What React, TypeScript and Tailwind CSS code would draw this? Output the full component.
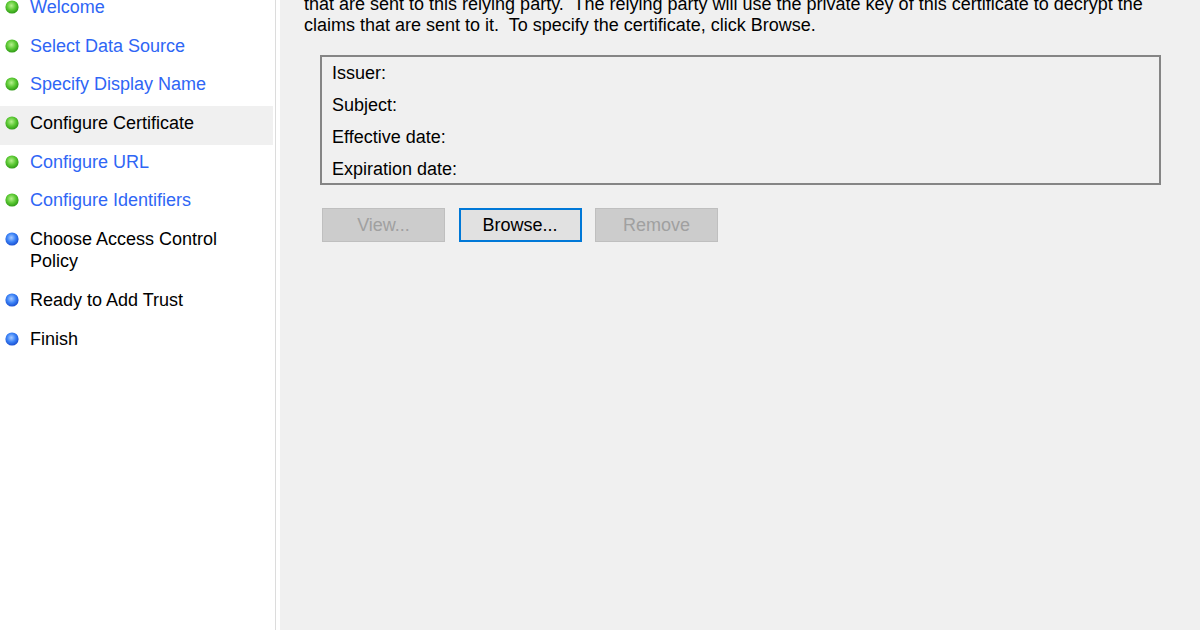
import React from 'react'

type Step = { label: string; status: 'done' | 'current' | 'todo'; link?: boolean }

const steps: Step[] = [
  { label: 'Welcome', status: 'done', link: true },
  { label: 'Select Data Source', status: 'done', link: true },
  { label: 'Specify Display Name', status: 'done', link: true },
  { label: 'Configure Certificate', status: 'current' },
  { label: 'Configure URL', status: 'done', link: true },
  { label: 'Configure Identifiers', status: 'done', link: true },
  { label: 'Choose Access Control\nPolicy', status: 'todo' },
  { label: 'Ready to Add Trust', status: 'todo' },
  { label: 'Finish', status: 'todo' },
]

function Dot({ color }: { color: 'green' | 'blue' }) {
  const id = `dot-${color}`
  const stops =
    color === 'green'
      ? ['#b6f08e', '#5cc934', '#2f9a16']
      : ['#a9cbff', '#3b82f6', '#1a4fd0']
  return (
    <svg width="14" height="14" viewBox="0 0 14 14" className="shrink-0">
      <defs>
        <radialGradient id={id} cx="45%" cy="40%" r="60%">
          <stop offset="0%" stopColor={stops[0]} />
          <stop offset="55%" stopColor={stops[1]} />
          <stop offset="100%" stopColor={stops[2]} />
        </radialGradient>
      </defs>
      <circle cx="7" cy="7" r="6.6" fill={`url(#${id})`} />
    </svg>
  )
}

function StepItem({ step }: { step: Step }) {
  const active = step.status === 'current'
  return (
    <div
      className={`flex items-start pl-[5px] pt-[6px] pb-[10.7px] ${active ? 'bg-[#f0f0f0]' : ''}`}
    >
      <div className="flex h-[22px] items-center">
        <Dot color={step.status === 'todo' ? 'blue' : 'green'} />
      </div>
      <span
        className={`ml-[11px] whitespace-pre leading-[22px] ${step.link ? 'text-[#2f66f5]' : 'text-black'}`}
      >
        {step.label}
      </span>
    </div>
  )
}

function WinButton({ label, primary, disabled }: { label: string; primary?: boolean; disabled?: boolean }) {
  return (
    <button
      disabled={disabled}
      className={
        primary
          ? 'h-[34px] w-[123px] border-2 border-[#0078d7] bg-[#e1e1e1] text-black'
          : 'h-[34px] w-[123px] border border-[#bfbfbf] bg-[#cccccc] text-[#a0a0a0]'
      }
    >
      {label}
    </button>
  )
}

export default function App() {
  return (
    <div
      className="flex h-[630px] w-[1200px] overflow-hidden text-[18px]"
      style={{ fontFamily: '"Liberation Sans", Arial, sans-serif' }}
    >
      {/* wizard steps */}
      <div className="w-[275px] shrink-0 bg-white pr-[2px]">
        <div className="mt-[-10px]">
          {steps.map((s) => (
            <StepItem key={s.label} step={s} />
          ))}
        </div>
      </div>
      <div className="w-px shrink-0 bg-[#dcdcdc]" />
      <div className="w-[4px] shrink-0 bg-white" />

      {/* page content */}
      <div className="flex-1 bg-[#f0f0f0] pl-[24px] text-black">
        <div className="mt-[-6px] leading-[21px]">
          <div className="whitespace-pre">
            that are sent to this relying party.  The relying party will use the private key of this certificate to decrypt the
          </div>
          <div className="whitespace-pre">
            claims that are sent to it.  To specify the certificate, click Browse.
          </div>
        </div>

        <div className="ml-[16px] mt-[19px] h-[130px] w-[841px] border-2 border-[#858585] pl-[10px]">
          {['Issuer:', 'Subject:', 'Effective date:', 'Expiration date:'].map((l) => (
            <div key={l} className="leading-[32px]">
              {l}
            </div>
          ))}
        </div>

        <div className="ml-[18px] mt-[23px] flex gap-[13.5px]">
          <WinButton label="View..." disabled />
          <WinButton label="Browse..." primary />
          <WinButton label="Remove" disabled />
        </div>
      </div>
    </div>
  )
}
